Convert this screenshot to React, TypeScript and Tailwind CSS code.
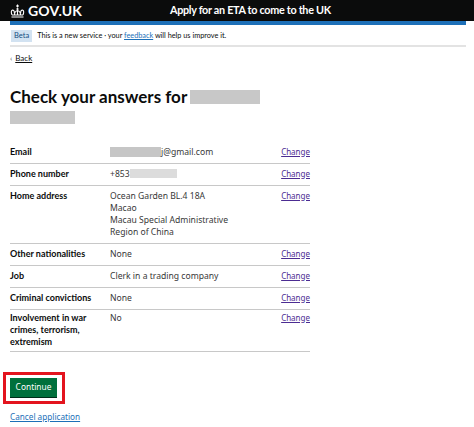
import React from "react";

const Crown = () => (
  <svg width="15" height="14" viewBox="0 0 30 28" fill="none" stroke="white" strokeWidth="2.2">
    <path d="M15 1v6M12 4h6" />
    <circle cx="15" cy="10" r="2.2" fill="white" stroke="none" />
    <path d="M3 26h24M4 22h22" />
    <path d="M4 22c-2-5-2-9 1-10 3 0 4 4 4 7M26 22c2-5 2-9-1-10-3 0-4 4-4 7" />
    <path d="M9 22c0-5 2-8 6-9 4 1 6 4 6 9" />
    <path d="M15 13v9" />
  </svg>
);

const rows: { k: React.ReactNode; v: React.ReactNode; tight?: boolean }[] = [
  {
    k: "Email",
    v: (
      <span className="flex items-center">
        <span className="inline-block w-[51px] h-[10px] bg-[#c6c6c6]" />
        <span>j@gmail.com</span>
      </span>
    ),
  },
  {
    k: "Phone number",
    v: (
      <span className="flex items-center">
        <span>+853</span>
        <span className="inline-block w-[47px] h-[9px] bg-[#dcdcdc]" />
      </span>
    ),
  },
  {
    k: "Home address",
    v: (
      <>
        Ocean Garden BL.4 18A
        <br />
        Macao
        <br />
        Macau Special Administrative
        <br />
        Region of China
      </>
    ),
  },
  { k: "Other nationalities", v: "None" },
  { k: "Job", v: "Clerk in a trading company" },
  { k: "Criminal convictions", v: "None" },
  {
    k: (
      <>
        Involvement in war
        <br />
        crimes, terrorism,
        <br />
        extremism
      </>
    ),
    v: "No",
    tight: true,
  },
];

const noto = { fontFamily: "'Noto Sans', sans-serif" };

export default function App() {
  return (
    <div
      className="w-[474px] h-[427px] bg-white text-[#0b0c0c] overflow-hidden"
      style={{ fontFamily: "Lato, 'Noto Sans', sans-serif" }}
    >
      <div className="bg-[#0b0c0c] h-[21px] flex items-center">
        <div className="flex items-center pl-[10px] w-[160px]">
          <Crown />
          <span className="ml-[3px] text-white font-bold text-[14px] leading-none tracking-[0.2px]">GOV.UK</span>
        </div>
        <div className="ml-[10px] text-white font-bold text-[10.8px] leading-none tracking-[-0.3px]">
          Apply for an ETA to come to the UK
        </div>
      </div>
      <div className="pl-[10px] pr-[8px]">
        <div className="h-[4px] bg-[#1d70b8]" />
        <div className="flex items-center pt-[5px] pb-[3px] border-b-[2px] border-[#e3e3e3]">
          <span className="ml-[1px] bg-[#d2e2f1] text-[#144e81] text-[7.5px] leading-none px-[3px] py-[2px]">Beta</span>
          <span className="ml-[5px] text-[7.3px] leading-none">
            This is a new service · your{" "}
            <span className="text-[#1d70b8] underline">feedback</span> will help us improve it.
          </span>
        </div>
        <div className="mt-[7px] text-[8px] leading-none flex items-center">
          <span className="text-[#505a5f] mr-[3px]">‹</span>
          <span className="underline">Back</span>
        </div>

        <h1 className="mt-[25px] font-bold text-[17px]">
          <span className="flex items-center h-[21px]">
            Check your answers for
            <span className="inline-block ml-[3px] w-[70px] h-[14px] bg-[#c8c8c8]" />
          </span>
          <span className="block mt-[3px] w-[65px] h-[13px] bg-[#c8c8c8]" />
        </h1>

        <div className="mt-[18px] w-[300px] text-[8.6px] leading-[12px]">
          {rows.map((r, i) => (
            <div
              key={i}
              className={
                r.tight
                  ? "grid grid-cols-[100px_1fr_auto] border-b border-[#c8c8c8] pt-[2px] pb-[3px]"
                  : "grid grid-cols-[100px_1fr_auto] border-b border-[#c8c8c8] pt-[4px] pb-[5px]"
              }
            >
              <div className="font-bold text-[9px]">{r.k}</div>
              <div className="text-[#383838]" style={noto}>{r.v}</div>
              <div className="text-[#4c2c92] underline text-[8px]" style={noto}>Change</div>
            </div>
          ))}
        </div>

        <div className="mt-[20px] ml-[-7px] inline-block border-[3px] border-[#e3141e] pt-[3px] pb-[4px] pl-[4px] pr-[5px]">
          <div
            className="bg-[#00703c] text-white text-[8.4px] leading-none w-[47px] h-[19px] flex items-center justify-center shadow-[0_1px_0_#002d18]"
            style={noto}
          >
            Continue
          </div>
        </div>
        <div className="mt-[9px] text-[8.2px] leading-none text-[#1d70b8] underline" style={noto}>
          Cancel application
        </div>
      </div>
    </div>
  );
}
